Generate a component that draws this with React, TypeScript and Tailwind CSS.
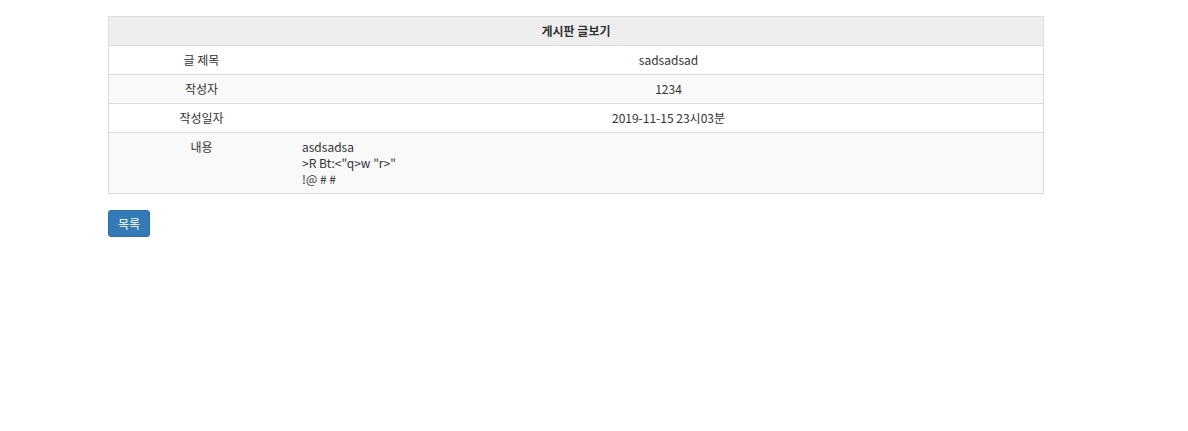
export default function App() {
  const font = { fontFamily: '"Noto Sans CJK KR", "Noto Sans", sans-serif' };
  return (
    <div className="w-[1188px] h-[431px] bg-white text-[12px] text-[#333]" style={font}>
      <div className="pt-4 pl-[108px]">
        <div className="w-[936px] border border-[#ddd]">
          <div className="h-[28px] bg-[#eee] flex items-center justify-center font-bold">게시판 글보기</div>
          <div className="h-[29px] border-t border-[#ddd] bg-white flex items-center">
            <div className="w-[185px] text-center">글 제목</div>
            <div className="flex-1 text-center">sadsadsad</div>
          </div>
          <div className="h-[29px] border-t border-[#ddd] bg-[#f9f9f9] flex items-center">
            <div className="w-[185px] text-center">작성자</div>
            <div className="flex-1 text-center">1234</div>
          </div>
          <div className="h-[29px] border-t border-[#ddd] bg-white flex items-center">
            <div className="w-[185px] text-center">작성일자</div>
            <div className="flex-1 text-center">2019-11-15 23시03분</div>
          </div>
          <div className="h-[61px] border-t border-[#ddd] bg-[#f9f9f9] flex items-start pt-[6px] leading-[16px]">
            <div className="w-[185px] text-center">내용</div>
            <div className="flex-1 pl-[8px]">
              <div>asdsadsa</div>
              <div>{'>R Bt:<"q>w "r>"'}</div>
              <div>!@ # #</div>
            </div>
          </div>
        </div>
        <button className="mt-4 h-[27px] w-[42px] rounded-[3px] bg-[#337ab7] border border-[#2e6da4] text-white text-[12px] flex items-center justify-center" style={font}>
          목록
        </button>
      </div>
    </div>
  );
}
